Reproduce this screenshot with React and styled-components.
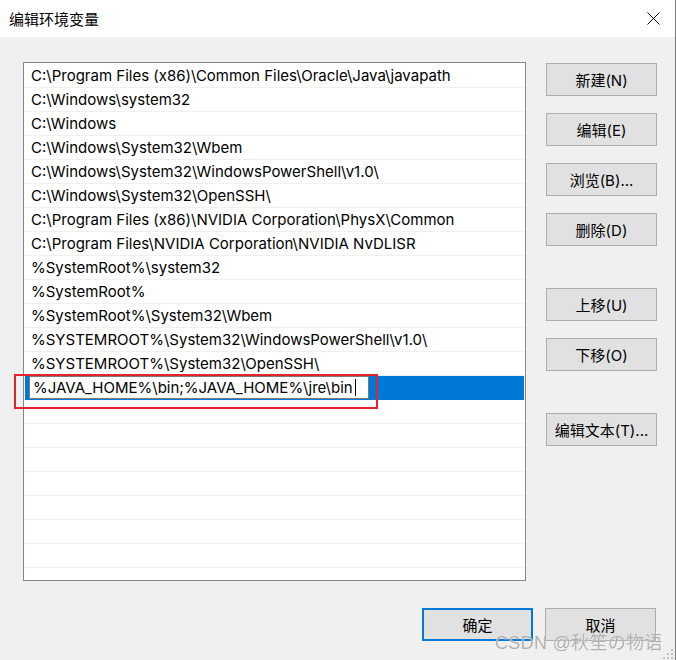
import React from "react";
import styled, { createGlobalStyle } from "styled-components";

const Global = createGlobalStyle`
  html, body { margin: 0; padding: 0; background: #f0f0f0; }
  body { font-family: Inter, "Noto Sans CJK SC", sans-serif; }
`;

const Window = styled.div`
  position: relative;
  width: 676px;
  height: 660px;
  box-sizing: border-box;
  border-right: 1px solid #7a7a7a;
  background: #f0f0f0;
  display: flex;
  flex-direction: column;
  overflow: hidden;
  font-family: Inter, "Noto Sans CJK SC", sans-serif;
  font-size: 15px;
  color: #000;
`;

const TitleBar = styled.div`
  height: 37px;
  flex: none;
  background: #fff;
  display: flex;
  align-items: center;
  justify-content: space-between;
  padding: 0 15px 0 9px;
`;

const Title = styled.span`
  font-size: 15px;
  font-family: "Noto Sans CJK SC", sans-serif;
`;

const CloseBtn = styled.svg`
  width: 13px;
  height: 13px;
  display: block;
`;

const Body = styled.div`
  display: flex;
  align-items: flex-start;
  padding: 25px 0 0 23px;
  gap: 20px;
`;

const List = styled.div`
  position: relative;
  width: 503px;
  height: 519px;
  box-sizing: border-box;
  border: 1px solid #828790;
  background: #fff;
  padding: 1px 1px 0;
`;

const Row = styled.div`
  height: 24px;
  box-sizing: border-box;
  border-bottom: 1px solid ${(p) => (p.$selected ? "#0078d7" : "#f0f0f0")};
  background: ${(p) => (p.$selected ? "#0078d7" : "#fff")};
  display: flex;
  align-items: center;
  padding-left: ${(p) => (p.$selected ? "4px" : "6px")};
  white-space: nowrap;
  position: relative;
  z-index: ${(p) => (p.$selected ? 2 : "auto")};
`;

const EditBox = styled.div`
  width: 340px;
  height: 23px;
  box-sizing: border-box;
  border: 1px solid #7a7a7a;
  background: #fff;
  display: flex;
  align-items: center;
  padding-left: 3px;
  white-space: nowrap;
`;

const Caret = styled.span`
  display: inline-block;
  width: 1px;
  height: 17px;
  background: #000;
  margin-left: 2px;
`;

const Highlight = styled.div`
  position: absolute;
  left: -11px;
  top: -2px;
  width: 364px;
  height: 35px;
  box-sizing: border-box;
  border: 2px solid #e3242b;
  pointer-events: none;
  z-index: 3;
`;

const Side = styled.div`
  display: flex;
  flex-direction: column;
  padding-top: 1px;
`;

const Button = styled.div`
  width: 111px;
  height: 33px;
  box-sizing: border-box;
  border: ${(p) => (p.$default ? "2px solid #0078d7" : "1px solid #adadad")};
  background: #e1e1e1;
  display: flex;
  align-items: center;
  justify-content: center;
  font-size: 15px;
  margin-top: ${(p) => p.$gap ?? 0}px;
  white-space: nowrap;
`;

const Footer = styled.div`
  display: flex;
  justify-content: flex-end;
  gap: 12px;
  padding: 27px 19px 0 0;
`;

const Watermark = styled.div`
  position: absolute;
  left: 495px;
  top: 628px;
  font-family: "Liberation Sans", "Noto Sans CJK SC", sans-serif;
  font-size: 18px;
  color: rgba(150, 150, 150, 0.75);
  text-shadow: 0 0 1px #fff;
  white-space: nowrap;
  letter-spacing: 0.3px;
`;

const Grip = styled.svg`
  position: absolute;
  right: 1px;
  bottom: 0;
  width: 11px;
  height: 11px;
`;

const items = [
  "C:\\Program Files (x86)\\Common Files\\Oracle\\Java\\javapath",
  "C:\\Windows\\system32",
  "C:\\Windows",
  "C:\\Windows\\System32\\Wbem",
  "C:\\Windows\\System32\\WindowsPowerShell\\v1.0\\",
  "C:\\Windows\\System32\\OpenSSH\\",
  "C:\\Program Files (x86)\\NVIDIA Corporation\\PhysX\\Common",
  "C:\\Program Files\\NVIDIA Corporation\\NVIDIA NvDLISR",
  "%SystemRoot%\\system32",
  "%SystemRoot%",
  "%SystemRoot%\\System32\\Wbem",
  "%SYSTEMROOT%\\System32\\WindowsPowerShell\\v1.0\\",
  "%SYSTEMROOT%\\System32\\OpenSSH\\",
];

export default function App() {
  const empty = Array.from({ length: 7 });
  return (
    <>
      <Global />
      <Window>
        <TitleBar>
          <Title>编辑环境变量</Title>
          <CloseBtn viewBox="0 0 13 13">
            <path d="M0.5 0.5 L12.5 12.5 M12.5 0.5 L0.5 12.5" stroke="#000" strokeWidth="1" fill="none" />
          </CloseBtn>
        </TitleBar>
        <Body>
          <List>
            {items.map((t) => (
              <Row key={t}>{t}</Row>
            ))}
            <Row $selected>
              <EditBox>
                %JAVA_HOME%\bin;%JAVA_HOME%\jre\bin
                <Caret />
              </EditBox>
              <Highlight />
            </Row>
            {empty.map((_, i) => (
              <Row key={i} />
            ))}
          </List>
          <Side>
            <Button>新建(N)</Button>
            <Button $gap={17}>编辑(E)</Button>
            <Button $gap={17}>浏览(B)...</Button>
            <Button $gap={17}>删除(D)</Button>
            <Button $gap={42}>上移(U)</Button>
            <Button $gap={17}>下移(O)</Button>
            <Button $gap={42}>编辑文本(T)...</Button>
          </Side>
        </Body>
        <Footer>
          <Button $default>确定</Button>
          <Button>取消</Button>
        </Footer>
        <Watermark>CSDN @秋笙の物语</Watermark>
        <Grip viewBox="0 0 11 11">
          {[
            [8, 0],
            [8, 4],
            [4, 4],
            [8, 8],
            [4, 8],
            [0, 8],
          ].map(([x, y]) => (
            <rect key={x + "-" + y} x={x} y={y} width="2" height="2" fill="#bfbfbf" />
          ))}
        </Grip>
      </Window>
    </>
  );
}
